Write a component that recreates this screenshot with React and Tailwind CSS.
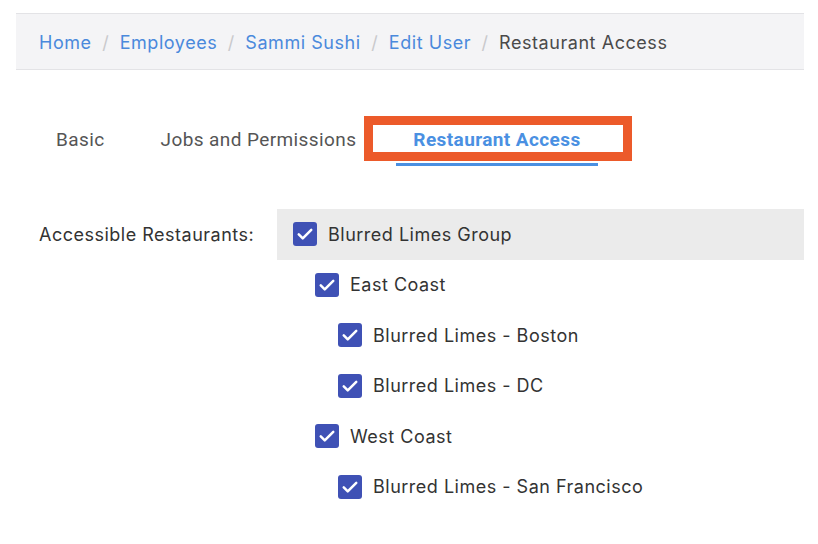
import React from "react";

const Check = () => (
  <span className="flex h-[24px] w-[24px] shrink-0 items-center justify-center rounded-[3px] bg-[#3f51b5]">
    <svg width="20" height="20" viewBox="0 0 24 24" fill="none">
      <path d="M4.5 12.5l4.8 4.8L19.5 7" stroke="#fff" strokeWidth="3" strokeLinecap="round" strokeLinejoin="round" />
    </svg>
  </span>
);

const rows = [
  { label: "Blurred Limes Group", level: 0, hl: true },
  { label: "East Coast", level: 1 },
  { label: "Blurred Limes - Boston", level: 2 },
  { label: "Blurred Limes - DC", level: 2 },
  { label: "West Coast", level: 1 },
  { label: "Blurred Limes - San Francisco", level: 2 },
];

const padFor = ["pl-[16px]", "pl-[38px]", "pl-[61px]"];

export default function App() {
  const crumbs = ["Home", "Employees", "Sammi Sushi", "Edit User"];
  return (
    <div className="min-h-[544px] w-[818px] bg-white" style={{ fontFamily: "Inter, 'Noto Sans', sans-serif" }}>
      <div className="ml-[16px] mr-[14px] mt-[13px] flex h-[57px] items-center border-y border-[#e3e3e6] bg-[#f4f4f6] pl-[23px] pt-[3px] text-[18px] leading-[24px] tracking-[0.55px]">
        {crumbs.map((c) => (
          <React.Fragment key={c}>
            <span className="text-[#4a89dc]">{c}</span>
            <span className="mx-[10.5px] text-[#c9c9cc]">/</span>
          </React.Fragment>
        ))}
        <span className="text-[#4a4a4a]">Restaurant Access</span>
      </div>

      <div
        className="ml-[38px] mt-[46px] flex gap-[20px] text-[19px] leading-[24px] tracking-[0.4px]"
        style={{ fontFamily: "Roboto, 'Noto Sans', sans-serif" }}
      >
        <div className="border-b-[3px] border-transparent px-[18px] pb-[11px] pt-[12px] text-[#555]">Basic</div>
        <div className="border-b-[3px] border-transparent px-[18px] pb-[11px] pt-[12px] text-[#555]">Jobs and Permissions</div>
        <div className="relative ml-[2px] border-b-[3px] border-[#4a90e2] px-[17px] pb-[11px] pt-[12px] font-bold text-[#4a90e2]">
          Restaurant Access
          <div className="absolute left-[-32px] right-[-34px] top-0 h-[45px] border-[9px] border-[#ec5a2a]" />
        </div>
      </div>

      <div className="mr-[14px] mt-[43px] flex text-[18px] leading-[24px] tracking-[0.5px] text-[#333]">
        <div className="flex h-[50px] w-[277px] shrink-0 items-center pl-[39px] pt-[1px]">Accessible Restaurants:</div>
        <div className="flex-1">
          {rows.map((r) => (
            <div
              key={r.label}
              className={`flex h-[50.5px] items-center gap-[11px] ${padFor[r.level]} ${r.hl ? "bg-[#ebebeb]" : ""}`}
            >
              <Check />
              <span className="pt-[1px]">{r.label}</span>
            </div>
          ))}
        </div>
      </div>
    </div>
  );
}
